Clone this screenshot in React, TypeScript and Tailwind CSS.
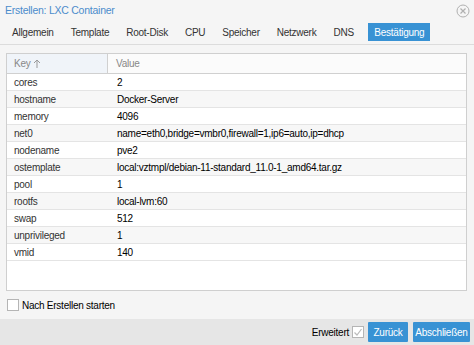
import React from "react";

const rows: [string, string][] = [
  ["cores", "2"],
  ["hostname", "Docker-Server"],
  ["memory", "4096"],
  ["net0", "name=eth0,bridge=vmbr0,firewall=1,ip6=auto,ip=dhcp"],
  ["nodename", "pve2"],
  ["ostemplate", "local:vztmpl/debian-11-standard_11.0-1_amd64.tar.gz"],
  ["pool", "1"],
  ["rootfs", "local-lvm:60"],
  ["swap", "512"],
  ["unprivileged", "1"],
  ["vmid", "140"],
];

const tabs = ["Allgemein", "Template", "Root-Disk", "CPU", "Speicher", "Netzwerk", "DNS"];

export default function App() {
  return (
    <div
      className="w-[474px] h-[345px] bg-[#f5f5f5] flex flex-col text-[10px] tracking-[-0.25px] text-[#333] overflow-hidden"
      style={{ fontFamily: '"Liberation Sans", Arial, sans-serif' }}
    >
      <div className="h-[20px] flex items-center justify-between pl-[5px] pr-[4px] pt-[1px]">
        <span className="text-[10.5px] text-[#4b8ccc]">Erstellen: LXC Container</span>
        <svg width="14" height="14" viewBox="0 0 14 14" className="text-[#b0b0b0]">
          <circle cx="7" cy="7" r="6" fill="none" stroke="currentColor" strokeWidth="1" />
          <path d="M4.5 4.5 L9.5 9.5 M9.5 4.5 L4.5 9.5" stroke="currentColor" strokeWidth="1.2" />
        </svg>
      </div>

      <div className="h-[25px] flex items-center pl-[3.5px] border-b border-[#dcdcdc]">
        {tabs.map((t) => (
          <div key={t} className="px-[8.5px] h-[18px] flex items-center whitespace-nowrap text-[#333]">
            {t}
          </div>
        ))}
        <div className="ml-[6px] px-[6px] h-[18px] flex items-center whitespace-nowrap bg-[#3892d4] text-white">
          Bestätigung
        </div>
      </div>

      <div className="mt-[8px] mx-[6px] w-[461px] h-[238px] bg-white border border-[#cfcfcf] flex flex-col">
        <div className="h-[20px] flex border-b border-[#d0d0d0] text-[#888]">
          <div className="w-[101px] bg-[#f0f4f9] border-r border-[#d0d0d0] flex items-center pl-[7px] gap-[3px]">
            Key
            <svg width="8" height="10" viewBox="0 0 8 10">
              <path d="M4 1 L4 9 M1 4 L4 1 L7 4" fill="none" stroke="#999" strokeWidth="1" />
            </svg>
          </div>
          <div className="flex-1 flex items-center pl-[8px] bg-[#fbfbfb]">Value</div>
        </div>
        {rows.map(([k, v], i) => (
          <div
            key={k}
            className={`h-[17px] flex items-center border-b border-[#e4e4e4] ${i % 2 === 1 ? "bg-[#f7f7f7]" : "bg-white"}`}
          >
            <div className="w-[101px] pl-[7px]">{k}</div>
            <div className="pl-[9px] text-black">{v}</div>
          </div>
        ))}
      </div>

      <div className="h-[26px] flex items-center pl-[7px] gap-[2px] mt-[1px]">
        <div className="w-[12px] h-[12px] border border-[#b5b5b5] bg-white" />
        <span className="ml-[1px] text-black">Nach Erstellen starten</span>
      </div>

      <div className="flex-1 bg-[#e6e6e6] flex items-center justify-end pr-[4px] mt-[1px]">
        <span className="text-black">Erweitert</span>
        <svg width="12" height="12" viewBox="0 0 12 12" className="ml-[3px] mr-[4px]">
          <rect x="0.5" y="0.5" width="11" height="11" fill="#fff" stroke="#b5b5b5" />
          <path d="M2.5 6.5 L5 9 L9.5 3" fill="none" stroke="#bbb" strokeWidth="1.2" />
        </svg>
        <div className="h-[20px] w-[40px] flex items-center justify-center bg-[#3892d4] text-white rounded-[1px]">
          Zurück
        </div>
        <div className="ml-[5px] h-[20px] w-[57px] flex items-center justify-center bg-[#3892d4] text-white rounded-[1px]">
          Abschließen
        </div>
      </div>
    </div>
  );
}
